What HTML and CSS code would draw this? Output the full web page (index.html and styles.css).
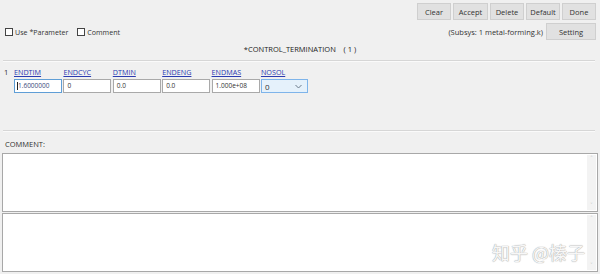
FILE: index.html
```html
<!DOCTYPE html>
<html>
<head>
<meta charset="utf-8">
<link rel="stylesheet" href="styles.css">
</head>
<body>
<div class="toolbar">
  <button class="btn">Clear</button>
  <button class="btn w35">Accept</button>
  <button class="btn">Delete</button>
  <button class="btn">Default</button>
  <button class="btn">Done</button>
</div>
<div class="bar2">
  <div class="checks">
    <label class="chk"><span class="box"></span>Use *Parameter</label>
    <label class="chk"><span class="box"></span>Comment</label>
  </div>
  <div class="subsys">
    <span class="subsys-text">(Subsys: 1 metal-forming.k)</span>
    <button class="btn setting">Setting</button>
  </div>
</div>
<div class="title">*CONTROL_TERMINATION&nbsp;&nbsp;&nbsp;&nbsp;( 1 )</div>
<div class="sep"></div>
<div class="card">
  <div class="rownum">1</div>
  <div class="fields">
    <div class="field"><span class="lbl">ENDTIM</span><div class="inp focus"><span class="caret"></span>1.6000000</div></div>
    <div class="field"><span class="lbl">ENDCYC</span><div class="inp">0</div></div>
    <div class="field"><span class="lbl">DTMIN</span><div class="inp">0.0</div></div>
    <div class="field"><span class="lbl">ENDENG</span><div class="inp">0.0</div></div>
    <div class="field"><span class="lbl">ENDMAS</span><div class="inp">1.000e+08</div></div>
    <div class="field"><span class="lbl">NOSOL</span><div class="sel"><span class="sel-val">0</span><svg class="chev" width="7" height="5" viewBox="0 0 7 5"><path d="M0.5 1 L3.5 4 L6.5 1" fill="none" stroke="#6a7a8a" stroke-width="1"/></svg></div></div>
  </div>
</div>
<div class="sep sep2"></div>
<div class="comment-label">COMMENT:</div>
<div class="ta">
  <div class="sb"><span class="arr">&#708;</span><span class="arr">&#709;</span></div>
</div>
<div class="ta ta2">
  <div class="wm">知乎 @榛子</div>
  <div class="sb"><span class="arr">&#708;</span><span class="arr">&#709;</span></div>
</div>
</body>
</html>
```
FILE: styles.css
```css
* { box-sizing: border-box; }
html, body { margin: 0; padding: 0; }
body {
  width: 600px;
  height: 274px;
  overflow: hidden;
  background: #f0f0f0;
  font-family: "Open Sans", "Noto Sans", sans-serif;
  font-size: 8px;
  color: #222;
}
.toolbar {
  display: flex;
  justify-content: flex-end;
  gap: 2px;
  padding: 3px 4px 0 0;
}
.btn {
  width: 34px;
  height: 17px;
  padding: 0;
  margin: 0;
  background: #e1e1e1;
  border: 1px solid #cfcfcf;
  font-family: inherit;
  font-size: 7.5px;
  color: #333;
}
.btn.w35 { width: 35px; }
.bar2 {
  display: flex;
  justify-content: space-between;
  align-items: center;
  margin-top: 3px;
  padding: 0 4px 0 5px;
  height: 17px;
}
.checks { display: flex; gap: 9px; align-items: center; }
.chk {
  display: flex;
  align-items: center;
  gap: 2px;
  font-size: 7.1px;
  color: #333;
}
.box {
  width: 8px;
  height: 8px;
  border: 1px solid #444;
  background: #fff;
}
.subsys { display: flex; align-items: center; gap: 3px; }
.subsys-text { font-size: 7.5px; color: #333; }
.btn.setting { width: 50px; }
.title {
  margin-top: 3px;
  line-height: 12px;
  text-align: center;
  font-size: 7.5px;
  color: #222;
}
.sep {
  margin: 5px 5px 0 3px;
  height: 2px;
  border-top: 1px solid #d6d6d6;
  border-bottom: 1px solid #fafafa;
}
.card {
  display: flex;
  padding: 5px 0 0 4px;
}
.rownum {
  width: 10px;
  font-size: 7.5px;
  line-height: 10px;
  color: #333;
}
.fields {
  display: flex;
  gap: 1.4px;
}
.field {
  display: flex;
  flex-direction: column;
  gap: 2px;
  width: 48px;
}
.lbl {
  line-height: 10px;
  font-size: 7.2px;
  color: #2b3bb0;
  text-decoration: underline;
}
.inp {
  position: relative;
  height: 14px;
  background: #fff;
  border: 1px solid #a9a9a9;
  font-size: 6.5px;
  line-height: 12px;
  padding-left: 3px;
  color: #333;
}
.inp.focus { border-color: #5f9ed6; color: #3a4a7a; }
.caret {
  position: absolute;
  left: 2px;
  top: 2px;
  width: 1px;
  height: 8px;
  background: #222;
}
.sel {
  width: 47px;
  height: 14px;
  background: #e5f1fb;
  border: 1px solid #7eb4ea;
  display: flex;
  align-items: center;
  justify-content: space-between;
  padding: 0 5px 0 3px;
  font-size: 8px;
  color: #333;
}
.sep2 { margin-top: 37px; margin-left: 3px; }
.comment-label {
  margin-top: 6px;
  padding-left: 5px;
  line-height: 12px;
  font-size: 7.5px;
  color: #333;
}
.ta {
  position: relative;
  margin: 3px 2px 0 2px;
  height: 59px;
  background: #fff;
  border: 1px solid #a8a8a8;
  display: flex;
  justify-content: flex-end;
}
.ta2 { margin-top: 1px; }
.sb {
  width: 9px;
  margin: 1px 1px 1px 0;
  background: #f3f3f3;
  display: flex;
  flex-direction: column;
  justify-content: space-between;
  align-items: center;
}
.arr {
  font-size: 7px;
  line-height: 8px;
  color: #b8b8b8;
}
.wm {
  position: absolute;
  right: 12px;
  bottom: 8px;
  font-family: "Noto Sans CJK SC", sans-serif;
  font-size: 18px;
  line-height: 22px;
  color: #f7f7f7;
  text-shadow: 0 0 1px #a8a8a8, 0 0 1px #a8a8a8;
}
```
